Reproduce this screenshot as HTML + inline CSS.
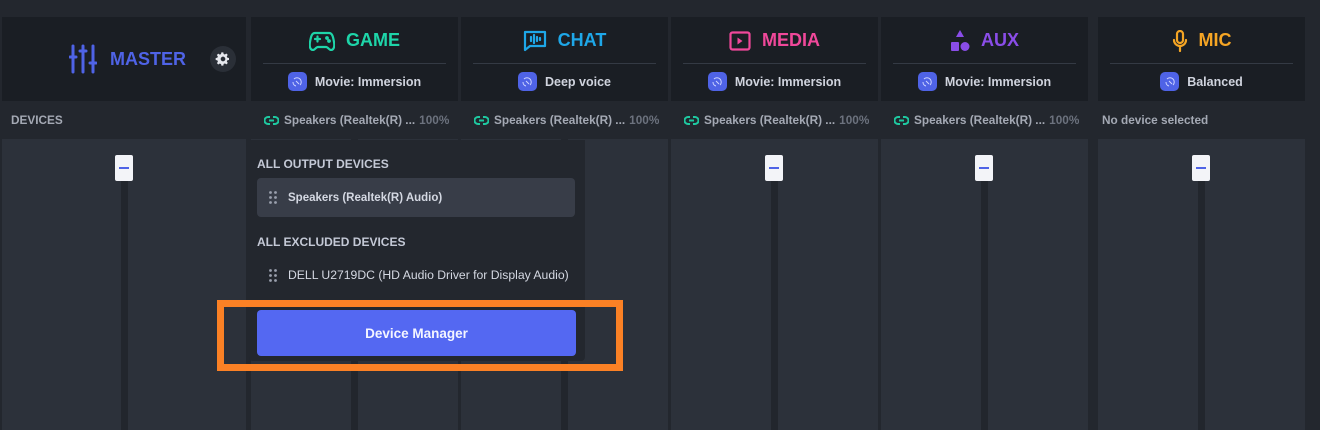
<!DOCTYPE html>
<html><head><meta charset="utf-8"><style>
*{box-sizing:border-box;margin:0;padding:0}
body{width:1320px;height:430px;background:#23272e;font-family:"Liberation Sans",sans-serif;position:relative;overflow:hidden;}
.top{position:absolute;top:17px;height:84px;background:#1a1e24;}
.low{position:absolute;top:139px;height:291px;background:#2c313a;}
.track{position:absolute;top:42px;bottom:0;width:7px;background:#22262d;margin-left:-3px}
.thumb{position:absolute;top:16px;width:18px;height:26px;margin-left:-9px;background:#f3f4f8;border-radius:2px;}
.thumb:after{content:"";position:absolute;left:4px;right:4px;top:12px;height:2px;background:#4f63e6}
.title{position:absolute;top:0;left:0;right:0;height:47px;display:flex;align-items:center;justify-content:center;gap:11px;font-weight:bold;font-size:18px}
.sep{position:absolute;top:46px;left:12px;right:12px;height:1px;background:#343a44}
.preset{position:absolute;top:55px;left:0;right:0;display:flex;align-items:center;justify-content:center;gap:8px;color:#d0d4de;font-size:12.5px;font-weight:bold}
.pi{width:19px;height:19px;border-radius:5px;background:#4f63e6;display:flex;align-items:center;justify-content:center}
.dev{position:absolute;top:113px;height:14px;font-size:11.8px;font-weight:bold;color:#a4a9b4;display:flex;align-items:center;gap:5px}
.dev .p{color:#6c727e;margin-left:-1px}
</style></head><body>

<div class="top" style="left:2px;width:244px">
  <div style="position:absolute;left:67px;top:27px;display:flex;align-items:center;gap:13px">
    <svg width="28" height="30" viewBox="0 0 28 30" fill="none" stroke="#4f63e6" stroke-width="3" stroke-linecap="round"><line x1="4" y1="2" x2="4" y2="28"/><line x1="14" y1="2" x2="14" y2="28"/><line x1="24" y1="2" x2="24" y2="28"/><line x1="1" y1="13" x2="7" y2="13"/><line x1="11" y1="7" x2="17" y2="7"/><line x1="21" y1="19" x2="27" y2="19"/></svg>
    <span style="color:#4f63e6;font-weight:bold;font-size:18px">MASTER</span>
  </div>
  <div style="position:absolute;left:208px;top:29px;width:26px;height:26px;border-radius:13px;background:#2a2f37;display:flex;align-items:center;justify-content:center">
    <svg width="16" height="16" viewBox="0 0 24 24"><path fill-rule="evenodd" fill="#e6e8ee" d="M12 8.5a3.5 3.5 0 100 7 3.5 3.5 0 000-7zm9 5v-3l-2.6-.5a7 7 0 00-.8-1.9l1.5-2.2-2.1-2.1-2.2 1.5a7 7 0 00-1.9-.8L12.5 2h-3l-.5 2.6a7 7 0 00-1.9.8L4.9 3.9 2.8 6l1.5 2.2a7 7 0 00-.8 1.9L1 10.5v3l2.6.5c.2.7.4 1.3.8 1.9l-1.5 2.2 2.1 2.1 2.2-1.5c.6.4 1.2.6 1.9.8l.4 2.5h3l.5-2.6c.7-.2 1.3-.4 1.9-.8l2.2 1.5 2.1-2.1-1.5-2.2c.4-.6.6-1.2.8-1.9z"/></svg>
  </div>
</div>

<div class="top" style="left:251px;width:207px">
  <div class="title" style="color:#1ed5a9"><svg width="26" height="20" viewBox="0 0 26 20" fill="none" stroke="#1ed5a9" stroke-width="2.2" stroke-linejoin="round"><path d="M6 2h14c3 0 4 3 5 9s-1 8-3 8c-2 0-3-3-5-3H9c-2 0-3 3-5 3s-4-2-3-8 2-9 5-9z"/><path d="M6 8h5M8.5 5.5v5" stroke-linecap="round"/><circle cx="18" cy="7" r=".8" fill="#1ed5a9"/><circle cx="20" cy="10" r=".8" fill="#1ed5a9"/></svg>GAME</div>
  <div class="sep"></div>
  <div class="preset"><div class="pi"><svg width="12" height="12" viewBox="0 0 12 12" fill="none" stroke="#cfd5ff" stroke-width="1"><path d="M3 3a4 4 0 016 6M2 6a4 4 0 003 4M5 5l3 3"/></svg></div>Movie: Immersion</div>
</div>
<div class="top" style="left:461px;width:207px">
  <div class="title" style="color:#1ea7e8"><svg width="24" height="22" viewBox="0 0 24 22" fill="none" stroke="#1ea7e8" stroke-width="2.2" stroke-linecap="round" stroke-linejoin="round"><path d="M2 2h20v14H7l-5 4z"/><path d="M8 7v4M11 5v8M14 7v4M17 8v2"/></svg>CHAT</div>
  <div class="sep"></div>
  <div class="preset"><div class="pi"><svg width="12" height="12" viewBox="0 0 12 12" fill="none" stroke="#cfd5ff" stroke-width="1"><path d="M3 3a4 4 0 016 6M2 6a4 4 0 003 4M5 5l3 3"/></svg></div>Deep voice</div>
</div>
<div class="top" style="left:671px;width:207px">
  <div class="title" style="color:#f0489a"><svg width="22" height="20" viewBox="0 0 22 20" fill="none" stroke="#f0489a" stroke-width="2.2"><rect x="1.5" y="1.5" width="19" height="17" rx="2"/><path d="M8.5 6.5v7l5-3.5z" fill="#f0489a" stroke="none"/></svg>MEDIA</div>
  <div class="sep"></div>
  <div class="preset"><div class="pi"><svg width="12" height="12" viewBox="0 0 12 12" fill="none" stroke="#cfd5ff" stroke-width="1"><path d="M3 3a4 4 0 016 6M2 6a4 4 0 003 4M5 5l3 3"/></svg></div>Movie: Immersion</div>
</div>
<div class="top" style="left:881px;width:207px">
  <div class="title" style="color:#8a4de8"><svg width="20" height="22" viewBox="0 0 20 22" fill="#8a4de8"><path d="M10 0l4 7H6z"/><rect x="1" y="12" width="8" height="9" rx="1"/><circle cx="15" cy="16.5" r="4.5"/></svg>AUX</div>
  <div class="sep"></div>
  <div class="preset"><div class="pi"><svg width="12" height="12" viewBox="0 0 12 12" fill="none" stroke="#cfd5ff" stroke-width="1"><path d="M3 3a4 4 0 016 6M2 6a4 4 0 003 4M5 5l3 3"/></svg></div>Movie: Immersion</div>
</div>
<div class="top" style="left:1098px;width:207px">
  <div class="title" style="color:#f5a524"><svg width="16" height="22" viewBox="0 0 16 22" fill="none" stroke="#f5a524" stroke-width="2.2" stroke-linecap="round"><rect x="5" y="1" width="6" height="12" rx="3"/><path d="M2 10a6 6 0 0012 0M8 16v5"/></svg>MIC</div>
  <div class="sep"></div>
  <div class="preset"><div class="pi"><svg width="12" height="12" viewBox="0 0 12 12" fill="none" stroke="#cfd5ff" stroke-width="1"><path d="M3 3a4 4 0 016 6M2 6a4 4 0 003 4M5 5l3 3"/></svg></div>Balanced</div>
</div>

<div class="dev" style="left:11px">DEVICES</div>
<div class="dev" style="left:264px"><svg width="15" height="9" viewBox="0 0 15 9" fill="none" stroke="#1ec8a0" stroke-width="2"><path d="M6 1H4a3.5 3.5 0 000 7h2M9 1h2a3.5 3.5 0 010 7H9M5 4.5h5"/></svg>Speakers (Realtek(R) ... <span class="p">100%</span></div>
<div class="dev" style="left:474px"><svg width="15" height="9" viewBox="0 0 15 9" fill="none" stroke="#1ec8a0" stroke-width="2"><path d="M6 1H4a3.5 3.5 0 000 7h2M9 1h2a3.5 3.5 0 010 7H9M5 4.5h5"/></svg>Speakers (Realtek(R) ... <span class="p">100%</span></div>
<div class="dev" style="left:684px"><svg width="15" height="9" viewBox="0 0 15 9" fill="none" stroke="#1ec8a0" stroke-width="2"><path d="M6 1H4a3.5 3.5 0 000 7h2M9 1h2a3.5 3.5 0 010 7H9M5 4.5h5"/></svg>Speakers (Realtek(R) ... <span class="p">100%</span></div>
<div class="dev" style="left:894px"><svg width="15" height="9" viewBox="0 0 15 9" fill="none" stroke="#1ec8a0" stroke-width="2"><path d="M6 1H4a3.5 3.5 0 000 7h2M9 1h2a3.5 3.5 0 010 7H9M5 4.5h5"/></svg>Speakers (Realtek(R) ... <span class="p">100%</span></div>
<div class="dev" style="left:1102px">No device selected</div>

<div class="low" style="left:2px;width:244px"><div class="track" style="left:122px"></div><div class="thumb" style="left:122px"></div></div>
<div class="low" style="left:251px;width:207px"><div class="track" style="left:103px;top:0"></div></div>
<div class="low" style="left:461px;width:207px"><div class="track" style="left:103px;top:0"></div></div>
<div class="low" style="left:671px;width:207px"><div class="track" style="left:103px"></div><div class="thumb" style="left:103px"></div></div>
<div class="low" style="left:881px;width:207px"><div class="track" style="left:103px"></div><div class="thumb" style="left:103px"></div></div>
<div class="low" style="left:1098px;width:207px"><div class="track" style="left:103px"></div><div class="thumb" style="left:103px"></div></div>

<div style="position:absolute;left:249px;top:140px;width:336px;height:221px;background:#23272e;border-radius:0 0 4px 4px">
  <div style="position:absolute;left:8px;top:17px;font-size:12px;font-weight:bold;color:#c4c9d6">ALL OUTPUT DEVICES</div>
  <div style="position:absolute;left:8px;top:38px;width:318px;height:39px;background:#383d48;border-radius:4px;display:flex;align-items:center;gap:11px;padding-left:12px;font-size:11.5px;font-weight:bold;color:#d4d8e2">
    <svg width="8" height="13" viewBox="0 0 8 13" fill="#9aa0ad"><circle cx="1.5" cy="1.5" r="1.4"/><circle cx="6.5" cy="1.5" r="1.4"/><circle cx="1.5" cy="6.5" r="1.4"/><circle cx="6.5" cy="6.5" r="1.4"/><circle cx="1.5" cy="11.5" r="1.4"/><circle cx="6.5" cy="11.5" r="1.4"/></svg>Speakers (Realtek(R) Audio)</div>
  <div style="position:absolute;left:8px;top:95px;font-size:12px;font-weight:bold;color:#c4c9d6">ALL EXCLUDED DEVICES</div>
  <div style="position:absolute;left:20px;top:128px;display:flex;align-items:center;gap:11px;font-size:12.2px;color:#d4d8e2">
    <svg width="8" height="13" viewBox="0 0 8 13" fill="#9aa0ad"><circle cx="1.5" cy="1.5" r="1.4"/><circle cx="6.5" cy="1.5" r="1.4"/><circle cx="1.5" cy="6.5" r="1.4"/><circle cx="6.5" cy="6.5" r="1.4"/><circle cx="1.5" cy="11.5" r="1.4"/><circle cx="6.5" cy="11.5" r="1.4"/></svg>DELL U2719DC (HD Audio Driver for Display Audio)</div>
  <div style="position:absolute;left:8px;top:170px;width:319px;height:46px;background:#5468f2;border-radius:4px;display:flex;align-items:center;justify-content:center;font-size:13.5px;font-weight:bold;color:#f4f5ff">Device Manager</div>
</div>
<div style="position:absolute;left:217px;top:300px;width:406px;height:71px;border:7px solid #fb8125"></div>
</body></html>
